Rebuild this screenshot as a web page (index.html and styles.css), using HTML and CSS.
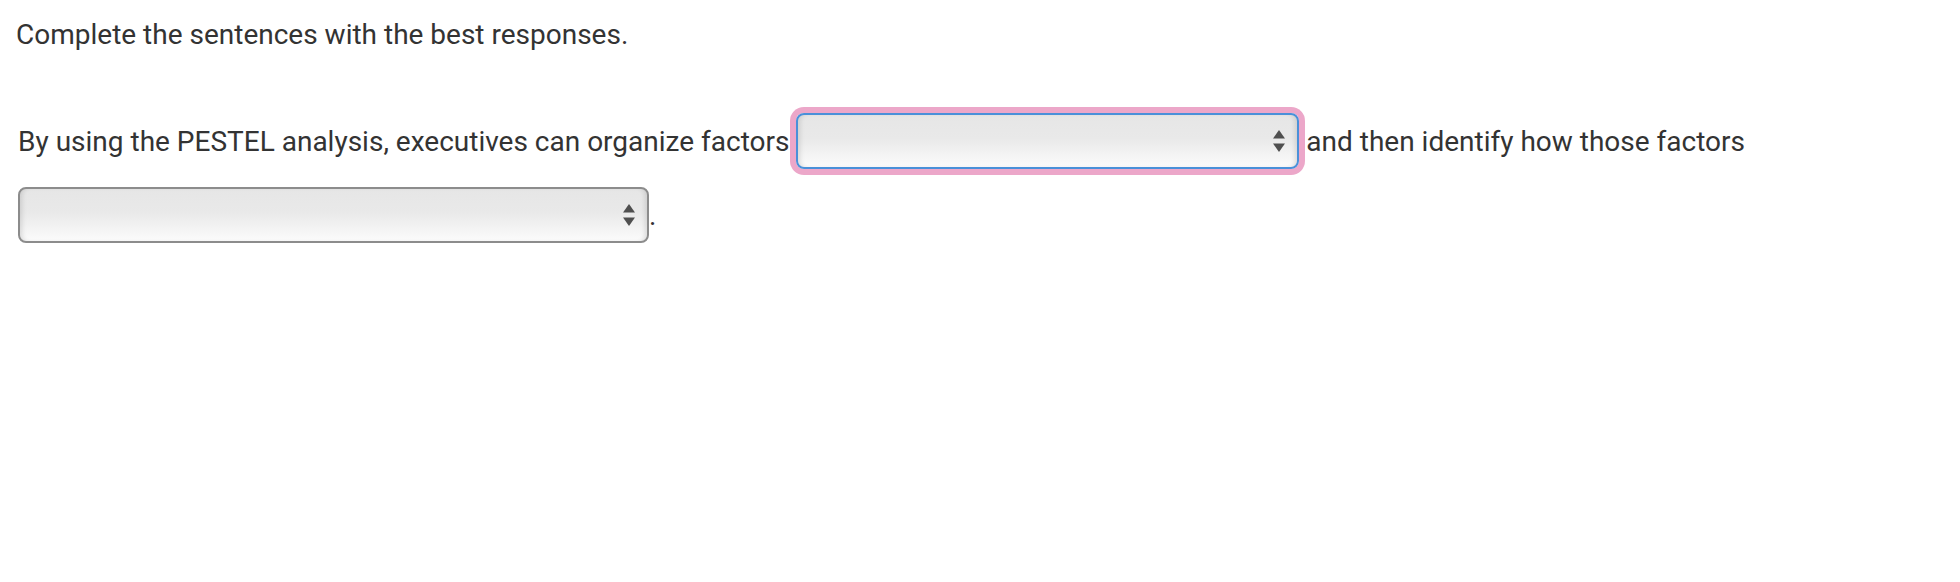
FILE: index.html
```html
<!DOCTYPE html>
<html lang="en">
<head>
<meta charset="utf-8">
<title>Complete the sentences</title>
<link rel="stylesheet" href="styles.css">
</head>
<body>
<main class="question">
  <p class="prompt">Complete the sentences with the best responses.</p>
  <p class="sentence">By using the PESTEL analysis, executives can organize factors <span class="dd dd-wide"><select class="dd-select dd-focus" aria-label="Blank 1"><option></option></select><svg class="dd-arrow" viewBox="0 0 12 22" width="12" height="22" aria-hidden="true"><polygon points="6,0 12,8.5 0,8.5"/><polygon points="0,13.5 12,13.5 6,22"/></svg></span> and then identify how those factors <span class="dd dd-wider"><select class="dd-select" aria-label="Blank 2"><option></option></select><svg class="dd-arrow" viewBox="0 0 12 22" width="12" height="22" aria-hidden="true"><polygon points="6,0 12,8.5 0,8.5"/><polygon points="0,13.5 12,13.5 6,22"/></svg></span>.</p>
</main>
</body>
</html>
```
FILE: styles.css
```css
html, body {
  margin: 0;
  padding: 0;
  background: #ffffff;
}

body {
  font-family: Roboto, "Liberation Sans", Arial, sans-serif;
  color: #333333;
}

.question {
  padding: 0 16px;
}

.prompt {
  margin: 18px 0 53px;
  font-size: 28px;
  line-height: normal;
}

.sentence {
  margin: 0;
  padding-left: 2px;
  font-size: 28px;
  line-height: normal;
}

.dd {
  position: relative;
  display: inline-block;
  margin: 9px 0;
  vertical-align: 3px;
}

.dd-wide {
  width: 503px;
}

.dd-wider {
  width: 631px;
}

.dd-select {
  display: block;
  width: 100%;
  height: 56px;
  margin: 0;
  padding: 0 40px 0 12px;
  box-sizing: border-box;
  -webkit-appearance: none;
  appearance: none;
  border: 2px solid #8c8c8c;
  border-radius: 8px;
  background: linear-gradient(to bottom, #e6e6e6 0%, #e9e9e9 45%, #f3f3f3 75%, #fbfbfb 100%);
  box-shadow: inset 5px 0 5px -3px rgba(0, 0, 0, 0.12), inset -5px 0 5px -3px rgba(0, 0, 0, 0.12);
  font-family: inherit;
  font-size: 20px;
  color: #333333;
  outline: none;
}

.dd-focus {
  border-color: #4a90d9;
  box-shadow: 0 0 0 6px #eca7c9, inset 5px 0 5px -3px rgba(0, 0, 0, 0.12), inset -5px 0 5px -3px rgba(0, 0, 0, 0.12);
}

.dd-arrow {
  position: absolute;
  right: 14px;
  top: 50%;
  transform: translateY(-50%);
  fill: #4f4f4f;
  pointer-events: none;
}
```
